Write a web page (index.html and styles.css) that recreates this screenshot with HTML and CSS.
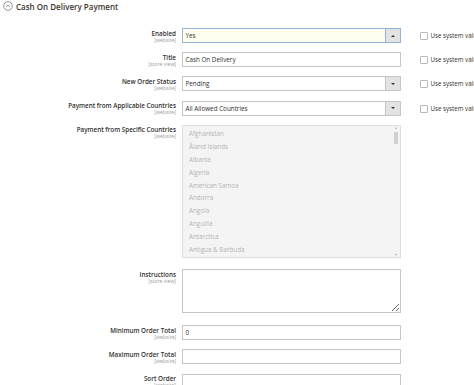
FILE: index.html
```html
<!DOCTYPE html>
<html lang="en">
<head>
  <meta charset="UTF-8" />
  <title>Cash On Delivery Payment</title>
  <link rel="stylesheet" href="styles.css">
</head>
<body>

  <div class="section-title">
    <svg class="toggle" width="10" height="10" viewBox="0 0 10 10">
      <circle cx="5" cy="5" r="4.3" fill="none" stroke="#777" stroke-width="0.8"/>
      <path d="M3.2 5.8 L5 4 L6.8 5.8" fill="none" stroke="#777" stroke-width="0.8"/>
    </svg>
    <span>Cash On Delivery Payment</span>
  </div>

  <div class="form">
    <div class="row">
      <div class="label">Enabled<small>[website]</small></div>
      <div class="select focused">
        <span class="value">Yes</span>
        <span class="arrow up"></span>
      </div>
      <label class="inherit"><span class="check"></span>Use system value</label>
    </div>

    <div class="row">
      <div class="label">Title<small>[store view]</small></div>
      <div class="input">Cash On Delivery</div>
      <label class="inherit"><span class="check"></span>Use system value</label>
    </div>

    <div class="row">
      <div class="label">New Order Status<small>[website]</small></div>
      <div class="select">
        <span class="value">Pending</span>
        <span class="arrow"></span>
      </div>
      <label class="inherit"><span class="check"></span>Use system value</label>
    </div>

    <div class="row">
      <div class="label">Payment from Applicable Countries<small>[website]</small></div>
      <div class="select">
        <span class="value">All Allowed Countries</span>
        <span class="arrow"></span>
      </div>
      <label class="inherit"><span class="check"></span>Use system value</label>
    </div>

    <div class="row">
      <div class="label">Payment from Specific Countries<small>[website]</small></div>
      <div class="multiselect">
        <ul class="options">
          <li>Afghanistan</li>
          <li>Åland Islands</li>
          <li>Albania</li>
          <li>Algeria</li>
          <li>American Samoa</li>
          <li>Andorra</li>
          <li>Angola</li>
          <li>Anguilla</li>
          <li>Antarctica</li>
          <li>Antigua &amp; Barbuda</li>
        </ul>
        <div class="scrollbar">
          <span class="sb-up"></span>
          <span class="thumb"></span>
          <span class="sb-down"></span>
        </div>
      </div>
      <div></div>
    </div>

    <div class="row spaced">
      <div class="label">Instructions<small>[store view]</small></div>
      <textarea class="textarea"></textarea>
      <div></div>
    </div>

    <div class="row spaced">
      <div class="label">Minimum Order Total<small>[website]</small></div>
      <div class="input">0</div>
      <div></div>
    </div>

    <div class="row">
      <div class="label">Maximum Order Total<small>[website]</small></div>
      <div class="input"></div>
      <div></div>
    </div>

    <div class="row">
      <div class="label">Sort Order<small>[website]</small></div>
      <div class="input"></div>
      <div></div>
    </div>
  </div>

</body>
</html>
```

FILE: styles.css
```css
* {
  margin: 0;
  padding: 0;
  box-sizing: border-box;
}
body {
  font-family: 'Open Sans', sans-serif;
  color: #303030;
  background: #ffffff;
  overflow: hidden;
  height: 385px;
}
.section-title {
  display: flex;
  align-items: center;
  gap: 3px;
  height: 12px;
  padding-left: 3px;
  font-size: 8px;
  font-weight: 600;
  color: #41362f;
}
.form {
  display: flex;
  flex-direction: column;
  gap: 9.2px;
  margin-top: 16px;
}
.row {
  display: grid;
  grid-template-columns: 176px 219px 1fr;
  column-gap: 6px;
  align-items: start;
}
.row.spaced {
  margin-top: 2.5px;
}
.label {
  text-align: right;
  font-size: 6.3px;
  font-weight: 600;
  line-height: 8px;
  padding-top: 1.5px;
  color: #303030;
}
.label small {
  display: block;
  font-size: 5.1px;
  font-weight: 400;
  line-height: 5.5px;
  color: #999;
}
.input,
.select {
  height: 15px;
  border: 1px solid #c6c6c6;
  background: #fff;
  font-size: 6.3px;
  line-height: 13px;
  padding-left: 2.5px;
}
.select {
  display: flex;
  padding-right: 0;
}
.select .value {
  flex: 1;
}
.select .arrow {
  width: 16px;
  margin: -1px -1px -1px 0;
  background: #e3e3e3;
  border: 1px solid #c6c6c6;
  display: flex;
  align-items: center;
  justify-content: center;
}
.select .arrow::after {
  content: "";
  border-left: 2px solid transparent;
  border-right: 2px solid transparent;
  border-top: 2.5px solid #333;
}
.select .arrow.up::after {
  border-top: 0;
  border-bottom: 2.5px solid #333;
}
.select.focused {
  border-color: #8fb6d8;
  background: #fffdf0;
}
.select.focused .arrow {
  border-color: #8fb6d8;
}
.inherit {
  display: flex;
  align-items: center;
  gap: 2.5px;
  padding-left: 13px;
  padding-top: 4px;
  font-size: 6.2px;
  line-height: 8px;
  white-space: nowrap;
}
.check {
  width: 8px;
  height: 8px;
  border: 1px solid #b8b8b8;
  border-radius: 1px;
  background: #fff;
}
.multiselect {
  display: flex;
  height: 133px;
  border: 1px solid #dedede;
  background: #f4f4f4;
}
.options {
  flex: 1;
  list-style: none;
  padding: 2.6px 0 0 6px;
  font-size: 6.3px;
  line-height: 12.8px;
  color: #b4b4b4;
  white-space: nowrap;
}
.scrollbar {
  width: 6px;
  margin-right: 1px;
  display: flex;
  flex-direction: column;
  align-items: center;
  padding: 1px 0;
}
.sb-up,
.sb-down {
  border-left: 1.5px solid transparent;
  border-right: 1.5px solid transparent;
}
.sb-up {
  border-bottom: 2px solid #b0b0b0;
}
.sb-down {
  border-top: 2px solid #b0b0b0;
}
.thumb {
  width: 4px;
  height: 12px;
  margin-top: 3px;
  border-radius: 1px;
  background: #cfcfcf;
  margin-bottom: auto;
}
.textarea {
  display: block;
  width: 219px;
  height: 44px;
  border: 1px solid #c6c6c6;
  background: #fff;
  font-family: 'Open Sans', sans-serif;
  font-size: 6.3px;
  outline: none;
}
```
